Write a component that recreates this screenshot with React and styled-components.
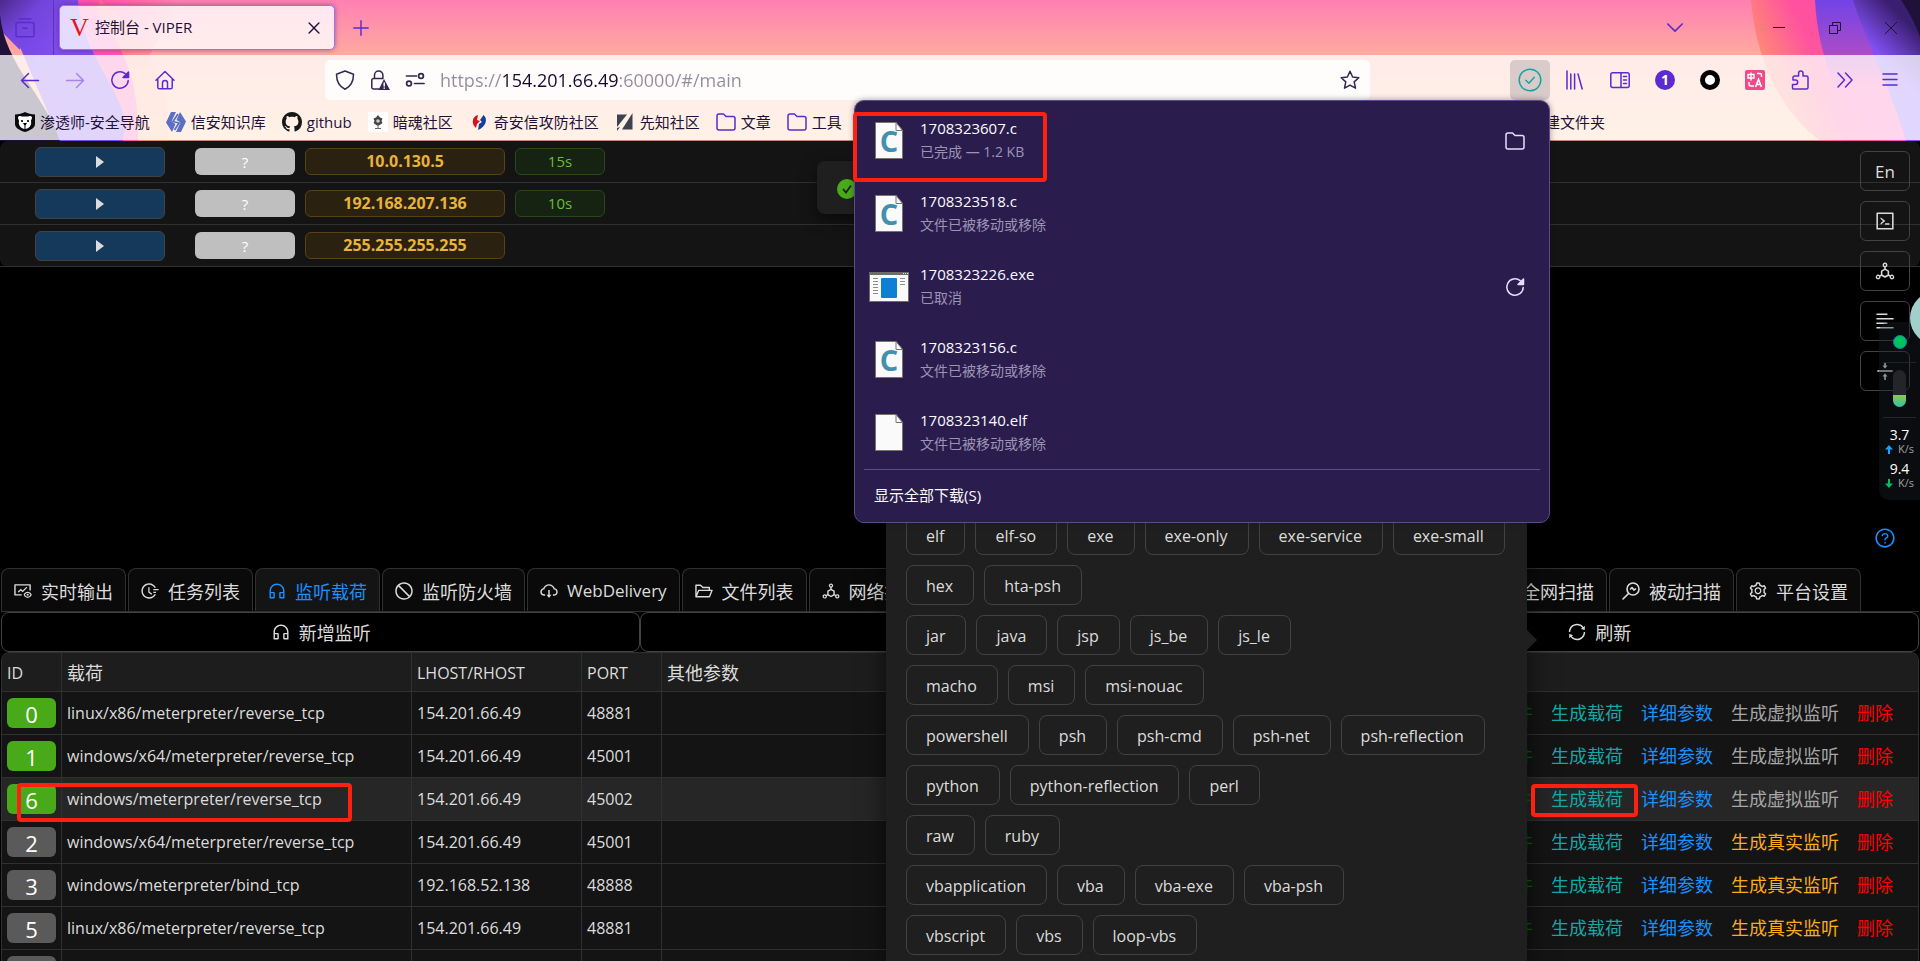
import React, { useState } from 'react'
import styled, { createGlobalStyle } from 'styled-components'
import {
  AiOutlineFundView,
  AiOutlineFieldTime,
  AiOutlineCustomerService,
  AiOutlineStop,
  AiOutlineCloudDownload,
  AiOutlineFolderOpen,
  AiOutlineDeploymentUnit,
  AiOutlineSetting,
  AiOutlineSync,
  AiOutlineCode,
  AiOutlineAlignLeft,
  AiOutlineVerticalAlignMiddle,
  AiOutlineQuestionCircle,
  AiOutlineRadarChart,
} from 'react-icons/ai'

const sessions = [
  { ip: '10.0.130.5', delay: '15s' },
  { ip: '192.168.207.136', delay: '10s' },
  { ip: '255.255.255.255' },
]

const downloads = [
  { name: '1708323607.c', state: '已完成 — 1.2 KB', type: 'c', action: 'folder' },
  { name: '1708323518.c', state: '文件已被移动或移除', type: 'c' },
  { name: '1708323226.exe', state: '已取消', type: 'exe', action: 'retry' },
  { name: '1708323156.c', state: '文件已被移动或移除', type: 'c' },
  { name: '1708323140.elf', state: '文件已被移动或移除', type: 'elf' },
]

const formats = [
  ['elf', 'elf-so', 'exe', 'exe-only', 'exe-service', 'exe-small'],
  ['hex', 'hta-psh'],
  ['jar', 'java', 'jsp', 'js_be', 'js_le'],
  ['macho', 'msi', 'msi-nouac'],
  ['powershell', 'psh', 'psh-cmd', 'psh-net', 'psh-reflection'],
  ['python', 'python-reflection', 'perl'],
  ['raw', 'ruby'],
  ['vbapplication', 'vba', 'vba-exe', 'vba-psh'],
  ['vbscript', 'vbs', 'loop-vbs'],
]

const handlers = [
  { id: 0, payload: 'linux/x86/meterpreter/reverse_tcp', host: '154.201.66.49', port: 48881, live: true },
  { id: 1, payload: 'windows/x64/meterpreter/reverse_tcp', host: '154.201.66.49', port: 45001, live: true },
  { id: 6, payload: 'windows/meterpreter/reverse_tcp', host: '154.201.66.49', port: 45002, live: true, hover: true },
  { id: 2, payload: 'windows/x64/meterpreter/reverse_tcp', host: '154.201.66.49', port: 45001 },
  { id: 3, payload: 'windows/meterpreter/bind_tcp', host: '192.168.52.138', port: 48888 },
  { id: 5, payload: 'linux/x86/meterpreter/reverse_tcp', host: '154.201.66.49', port: 48881 },
  { id: 4, payload: 'windows/x64/meterpreter/bind_tcp', host: '192.168.52.138', port: 48888 },
]

const leftTabs = [
  { label: '实时输出', icon: AiOutlineFundView },
  { label: '任务列表', icon: AiOutlineFieldTime },
  { label: '监听载荷', icon: AiOutlineCustomerService },
  { label: '监听防火墙', icon: AiOutlineStop },
  { label: 'WebDelivery', icon: AiOutlineCloudDownload, latin: true },
  { label: '文件列表', icon: AiOutlineFolderOpen },
  { label: '网络拓扑', icon: AiOutlineDeploymentUnit },
]

const rightTabs = [
  { label: '全网扫描', icon: AiOutlineRadarChart },
  { label: '被动扫描', icon: PassiveScanIcon },
  { label: '平台设置', icon: AiOutlineSetting },
]

/* ---------- icons ---------- */

function Line({ size = 20, width = 1.5, children, ...rest }) {
  return (
    <svg width={size} height={size} viewBox="0 0 20 20" fill="none" stroke="currentColor"
      strokeWidth={width} strokeLinecap="round" strokeLinejoin="round" {...rest}>
      {children}
    </svg>
  )
}

function PassiveScanIcon() {
  return (
    <Line size={18} width={1.6}>
      <circle cx="12" cy="8" r="6" />
      <path d="M7.500 12.500L2 18M9.500 8l1.500-1.500 1.800 2.500L14.500 8" />
    </Line>
  )
}

const ArchiveIcon = () => (
  <Line><path d="M4 1h12M2.6 4.6h14.8a1.6 1.6 0 0 1 1.6 1.6v11a1.6 1.6 0 0 1-1.6 1.6H2.6A1.6 1.6 0 0 1 1 17.200V6.200a1.6 1.6 0 0 1 1.600-1.600zM8 10.200h4" /></Line>
)
const CloseIcon = () => <Line size={14}><path d="M3 3l14 14M17 3L3 17" strokeWidth="2" /></Line>
const PlusIcon = () => <Line size={16}><path d="M10 1v18M1 10h18" strokeWidth="1.800" /></Line>
const BackIcon = () => <Line><path d="M18.500 10.500H1.500M8.500 3.500l-7 7 7 7" /></Line>
const ForwardIcon = () => <Line><path d="M1.500 10.500h17M11.500 3.500l7 7-7 7" /></Line>
const ReloadIcon = () => (
  <Line><path d="M18.200 10.500a8.200 8.200 0 1 1-3-6.800" /><path d="M18.500 2v5.500H13z" fill="currentColor" /></Line>
)
const HomeIcon = () => (
  <Line><path d="M1 10.200L10 1.500l9 8.700M2.800 9v8.200c0 1 .7 1.600 1.600 1.600h11.200c.9 0 1.600-.6 1.600-1.600V9M7.500 18.500V13a2.500 2.500 0 0 1 5 0v5.500" /></Line>
)
const ShieldIcon = () => (
  <Line><path d="M10 1l8.500 3.200c0 6.800-1.800 11.800-8.500 15C3.300 16 1.500 11 1.500 4.200z" /></Line>
)
const LockIcon = () => (
  <Line>
    <path d="M4.500 8.500V5.200a4.200 4.200 0 0 1 8.400 0v3.300M9 19H3.500A1.700 1.700 0 0 1 1.800 17.300V10.200a1.700 1.700 0 0 1 1.700-1.700H13" />
    <path d="M14 9l6 11H8.500z" fill="currentColor" stroke="none" />
    <path d="M14.200 13v3M14.200 18v.2" stroke="#fff" />
  </Line>
)
const PermissionIcon = () => (
  <Line width={1.700}><path d="M1.500 6h10M9.500 13.500H19" /><circle cx="16" cy="6" r="2.400" /><circle cx="4" cy="13.500" r="2.400" /></Line>
)
const StarIcon = () => (
  <Line><path d="M10 1.300l2.600 5.700 6.200.7-4.600 4.200 1.300 6.300L10 15.100l-5.500 3.100 1.300-6.300L1.200 7.700l6.200-.7z" /></Line>
)
const DoneIcon = () => <Line size={24} width={1.200}><circle cx="10" cy="10" r="9" /><path d="M6.500 10.200l2.600 2.500 4.500-5" /></Line>
const LibraryIcon = () => <Line><path d="M2 1v18M5.800 4v15M9.600 4v15M13 4l4.200 15" /></Line>
const SidebarIcon = () => (
  <Line><rect x=".8" y="2.800" width="18.400" height="14.600" rx="2" /><path d="M11 3v14M13.500 6.500h3M13.500 10h3M13.500 13.500h3" /></Line>
)
const PuzzleIcon = () => (
  <Line><path d="M3 19h13.500c.8 0 1.500-.7 1.500-1.500V7.500c0-.8-.7-1.500-1.500-1.500H13V3.200a2.200 2.200 0 0 0-4.400 0V6H4.500C3.700 6 3 6.700 3 7.500V10h2.500a2.200 2.200 0 0 1 0 4.400H2.500V18c0 .6.200 1 .5 1z" /></Line>
)
const MoreIcon = () => <Line><path d="M3 3l6.500 7L3 17M10.500 3l6.500 7-6.500 7" /></Line>
const MenuIcon = () => <Line><path d="M3 4h14M3 9.500h14M3 15h14" /></Line>
const ChevronIcon = () => <Line size={18}><path d="M2 5.500l8 8 8-8" strokeWidth="1.800" /></Line>
const FolderIcon = ({ size = 20 }) => (
  <Line size={size}><path d="M1 4a2 2 0 0 1 2-2h4.500l2.500 2.500h7a2 2 0 0 1 2 2V16a2 2 0 0 1-2 2H3a2 2 0 0 1-2-2z" /></Line>
)

const BearIcon = () => (
  <svg width="20" height="20" viewBox="0 0 20 20">
    <path d="M0 2.500C4 2.500 7 1.500 10 0c3 1.500 6 2.500 10 2.500V12c0 4-5 6.500-10 8-5-1.500-10-4-10-8z" fill="#0b0b0b" />
    <path d="M3 5.500C4 3 6 4 7 4.500h6c1-.5 3-1.500 4 1 0 2-1 2-1 3.500 1 4-2 8-6 8s-7-4-6-8c0-1.500-1-1.500-1-3.500z" fill="#fff" />
    <circle cx="7" cy="9" r="1.100" /><circle cx="13" cy="9" r="1.100" /><path d="M8 11h4l-1.500 2.500V17h-1v-3.500z" />
  </svg>
)
const KnowledgeIcon = () => (
  <svg width="20" height="20" viewBox="0 0 20 20">
    <path d="M5 0h5L5.500 9.500l4 2.500L6 20 0 10.500z" fill="#5b6fc4" />
    <path d="M15 20h-5l4.500-9.500-4-2.500L14 0l6 9.500z" fill="#5b6fc4" />
    <path d="M12 2L7 9.500l6 1.500-4.500 7" fill="none" stroke="#5b6fc4" strokeWidth="1.800" />
  </svg>
)
const GithubIcon = () => (
  <svg width="20" height="20" viewBox="0 0 16 16" fill="#181717">
    <path d="M8 0C3.580 0 0 3.580 0 8c0 3.540 2.290 6.530 5.470 7.590.4.070.55-.17.55-.38 0-.19-.01-.82-.01-1.490-2.010.37-2.530-.49-2.690-.94-.09-.23-.48-.94-.82-1.130-.28-.15-.68-.52-.01-.53.63-.01 1.080.58 1.230.82.72 1.210 1.870.87 2.330.66.07-.52.28-.87.51-1.070-1.780-.2-3.640-.89-3.640-3.950 0-.87.31-1.590.82-2.150-.08-.2-.36-1.020.08-2.120 0 0 .67-.21 2.200.82.64-.18 1.320-.27 2-.27s1.360.09 2 .27c1.530-1.040 2.200-.82 2.200-.82.44 1.100.16 1.920.08 2.120.51.56.82 1.270.82 2.150 0 3.070-1.870 3.750-3.650 3.950.29.25.54.73.54 1.480 0 1.070-.01 1.930-.01 2.200 0 .21.15.46.55.38A8.010 8.010 0 0 0 16 8c0-4.420-3.580-8-8-8z" />
  </svg>
)
const SoulIcon = () => (
  <svg width="20" height="20" viewBox="0 0 20 20">
    <rect width="20" height="20" fill="#fff" />
    <path d="M10 3l2 2.500 2.500 1-1 2.500 1 2-3.500 2.500h-2L5.500 11l1-2-1-2.500 2.500-1z" fill="#444" />
    <circle cx="10" cy="9" r="1.800" fill="#c9d6c4" />
    <path d="M10 12.500v4M7 16.500h6" stroke="#666" />
  </svg>
)
const BoltIcon = () => (
  <svg width="20" height="20" viewBox="0 0 20 20">
    <path d="M9 3C3 4 2 12 7 16l1-4 3-3-3-1z" fill="#d0161d" />
    <path d="M14.500 3c5 4 2 12-5.500 15l1-6 3-2-2-2z" fill="#123f9c" />
  </svg>
)
const XianzhiIcon = () => (
  <svg width="20" height="20" viewBox="0 0 20 20" fill="#3c424e">
    <path d="M2 2.500h10L2 15z" /><path d="M17.500 1v16.500H7z" /><path d="M2 16l3-1-3 4z" />
  </svg>
)
const TranslateIcon = () => (
  <svg width="20" height="20" viewBox="0 0 20 20">
    <rect width="20" height="20" rx="2" fill="#ec4b87" />
    <path d="M3 4.500h6v3.500H3zM6 2.500v8M12 3.500h3a1.500 1.500 0 0 1 1.500 1.500v2M4 12v2a2 2 0 0 0 2 2h3" fill="none" stroke="#fff" strokeWidth="1.400" />
    <path d="M10.500 17l3-7.500 3 7.500M11.500 14.500h4" fill="none" stroke="#fff" strokeWidth="1.600" />
  </svg>
)

function FileIcon({ type }) {
  if (type === 'exe') {
    return (
      <svg width="40" height="40" viewBox="0 0 40 40">
        <rect x=".5" y="5.500" width="39" height="29" fill="#fafafa" stroke="#6d6d68" />
        <path d="M0 5h40v3H0z" fill="#6d6d68" />
        <path d="M34 6.500h1M36 6.500h1M38 6.500h1" stroke="#ddd" />
        <path d="M4 11.500h5M4 14.500h5M4 17.500h5M4 20.500h5M4 23.500h5M4 26.500h5M31 11.500h5M31 14.500h5M31 17.500h5" stroke="#8c8c8c" />
        <rect x="12" y="11" width="16" height="20" rx="1" fill="#0f7fd4" />
      </svg>
    )
  }
  return (
    <svg width="40" height="40" viewBox="0 0 40 40">
      <path d="M6.500 1.500H27l6.500 8v28H6.500z" fill="#fafafa" stroke="#77756f" />
      <path d="M27 1.500v8h6.500z" fill="#fafafa" stroke="#77756f" />
      {type === 'c' && (
        <text x="20" y="31" textAnchor="middle" fontFamily="Open Sans, sans-serif" fontWeight="700" fontSize="29" fill="#438fae">C</text>
      )}
    </svg>
  )
}

// coloured ribbons behind the tab strip, one set per window corner
function Ribbons() {
  return (
    <>
      <RibbonSvg $side="left" width="240" height="141" viewBox="0 0 240 141">
        <defs>
          <linearGradient id="lp" x1="0" y1="0" x2="1" y2="0"><stop offset="0" stopColor="#ff4b9d" /><stop offset="1" stopColor="#ff4b9d" stopOpacity="0" /></linearGradient>
          <linearGradient id="lv" gradientUnits="userSpaceOnUse" x1="0" y1="0" x2="50" y2="50"><stop offset="0" stopColor="#4a2a8c" /><stop offset=".45" stopColor="#7445dc" /><stop offset="1" stopColor="#7f4ced" /></linearGradient>
        </defs>
        <path d="M70 0h110L150 55H95z" fill="url(#lp)" />
        <path d="M100 0C150 40 168 80 168 141H60z" fill="#ff9472" fillOpacity=".4" />
        <path d="M86 0C125 45 139 80 138 141H60L40 0z" fill="#ff50b0" fillOpacity=".9" />
        <path d="M78 0C80 40 105 70 118 100S123 130 123 141H60L0 0z" fill="url(#lv)" />
        <path d="M0 0v30l20 20L30 0z" fill="url(#lv)" />
        <path d="M0 15C5 65 45 95 60 141H0z" fill="#1f1139" />
      </RibbonSvg>
      <RibbonSvg $side="right" width="240" height="141" viewBox="0 0 240 141">
        <defs>
          <linearGradient id="rp" gradientUnits="userSpaceOnUse" x1="70" y1="40" x2="120" y2="20"><stop offset="0" stopColor="#ff8a6e" /><stop offset="1" stopColor="#ff4b9d" /></linearGradient>
          <linearGradient id="rv" x1="0" y1="0" x2="0" y2="1"><stop offset="0" stopColor="#7243e6" /><stop offset=".38" stopColor="#ab4cc8" /><stop offset=".6" stopColor="#ff50b0" /></linearGradient>
          <linearGradient id="rd" gradientUnits="userSpaceOnUse" x1="195" y1="50" x2="225" y2="20"><stop offset="0" stopColor="#8250f4" /><stop offset="1" stopColor="#3a1f70" /></linearGradient>
        </defs>
        <path d="M71 0C76 60 100 110 140 141h100V0z" fill="url(#rp)" fillOpacity=".9" />
        <path d="M135 0C138 60 160 110 200 141h40V0z" fill="url(#rv)" />
        <path d="M173 0C185 40 212 90 226 141h14V0z" fill="url(#rd)" />
        <path d="M221 0c9 14 15 25 19 37V0z" fill="#1f1139" />
      </RibbonSvg>
    </>
  )
}

/* ---------- sections ---------- */

function BrowserChrome() {
  const [url, setUrl] = useState('https://154.201.66.49:60000/#/main')

  return (
    <Chrome>
      <Ribbons />
      <TabStrip>
        <ArchiveBox><IconButton aria-label="最近浏览"><ArchiveIcon /></IconButton></ArchiveBox>
        <BrowserTab>
          <Favicon>V</Favicon>
          <span>控制台 - VIPER</span>
          <IconButton $dark aria-label="关闭标签页"><CloseIcon /></IconButton>
        </BrowserTab>
        <IconButton aria-label="打开新标签页"><PlusIcon /></IconButton>
        <WindowButtons>
          <IconButton aria-label="列出所有标签页"><ChevronIcon /></IconButton>
          <IconButton $dark aria-label="最小化"><svg width="12" height="12"><path d="M0 5.500h12" stroke="currentColor" /></svg></IconButton>
          <IconButton $dark aria-label="还原"><svg width="12" height="12" fill="none" stroke="currentColor"><path d="M.5 3.500h8v8h-8zM3.500 3.500v-3h8v8h-3" /></svg></IconButton>
          <IconButton $dark aria-label="关闭"><svg width="14" height="14" stroke="currentColor"><path d="M1 1l12 12M13 1L1 13" /></svg></IconButton>
        </WindowButtons>
      </TabStrip>
      <Toolbar>
        <NavRow>
          <NavButtons>
            <IconButton aria-label="后退"><BackIcon /></IconButton>
            <IconButton aria-label="前进" $faded><ForwardIcon /></IconButton>
            <IconButton aria-label="刷新"><ReloadIcon /></IconButton>
            <IconButton aria-label="主页"><HomeIcon /></IconButton>
          </NavButtons>
          <UrlBar>
            <ShieldIcon />
            <LockIcon />
            <PermissionIcon />
            <UrlInput aria-label="地址栏" value={url} onChange={(e) => setUrl(e.target.value)} />
            <StarIcon />
          </UrlBar>
          <ToolButtons>
            <IconButton aria-label="下载" $active><DoneIcon /></IconButton>
            <IconButton aria-label="我的足迹"><LibraryIcon /></IconButton>
            <IconButton aria-label="侧栏"><SidebarIcon /></IconButton>
            <IconButton aria-label="容器"><CountDot>1</CountDot></IconButton>
            <IconButton aria-label="代理"><Ring /></IconButton>
            <IconButton aria-label="翻译"><TranslateIcon /></IconButton>
            <IconButton aria-label="扩展"><PuzzleIcon /></IconButton>
            <IconButton aria-label="更多工具"><MoreIcon /></IconButton>
            <IconButton aria-label="应用程序菜单"><MenuIcon /></IconButton>
          </ToolButtons>
        </NavRow>
        <Bookmarks>
          <Bookmark href="#nav"><BearIcon />渗透师-安全导航</Bookmark>
          <Bookmark href="#kb"><KnowledgeIcon />信安知识库</Bookmark>
          <Bookmark href="#github"><GithubIcon />github</Bookmark>
          <Bookmark href="#anhun"><SoulIcon />暗魂社区</Bookmark>
          <Bookmark href="#butian"><BoltIcon />奇安信攻防社区</Bookmark>
          <Bookmark href="#xz"><XianzhiIcon />先知社区</Bookmark>
          <Bookmark href="#articles"><FolderIcon />文章</Bookmark>
          <Bookmark href="#tools"><FolderIcon />工具</Bookmark>
          <LastBookmark href="#new"><FolderIcon />新建文件夹</LastBookmark>
        </Bookmarks>
      </Toolbar>
    </Chrome>
  )
}

function DownloadsPanel() {
  return (
    <Downloads>
      <DownloadList>
        {downloads.map((item) => (
          <DownloadItem key={item.name}>
            <FileIcon type={item.type} />
            <div>
              <FileName>{item.name}</FileName>
              <FileState>{item.state}</FileState>
            </div>
            {item.action === 'folder' && <IconButton $light aria-label="打开文件夹"><FolderIcon /></IconButton>}
            {item.action === 'retry' && <IconButton $light aria-label="重试"><ReloadIcon /></IconButton>}
          </DownloadItem>
        ))}
      </DownloadList>
      <ShowAll>显示全部下载(S)</ShowAll>
      <RedFrame $left={-2} $top={11} $width={194} $height={70} />
    </Downloads>
  )
}

function SessionList() {
  return (
    <SessionRows>
      {sessions.map((s) => (
        <SessionRow key={s.ip}>
          <PlayButton aria-label="操作">
            <svg width="8" height="12" viewBox="0 0 8 12" fill="#dcdcdc"><path d="M0 0l8 6-8 6z" /></svg>
          </PlayButton>
          <UnknownTag>?</UnknownTag>
          <IpTag>{s.ip}</IpTag>
          {s.delay && <DelayTag>{s.delay}</DelayTag>}
        </SessionRow>
      ))}
    </SessionRows>
  )
}

function ConsoleTabs({ tabs, current, onSelect }) {
  return (
    <TabGroup>
      {tabs.map(({ label, icon: Icon, latin }) => (
        <ConsoleTab key={label} role="tab" $active={label === current} $latin={latin} onClick={() => onSelect(label)}>
          <Icon />{label}
        </ConsoleTab>
      ))}
    </TabGroup>
  )
}

function HandlerTable() {
  return (
    <Table>
      <colgroup>
        <col width="60" /><col width="350" /><col width="170" /><col width="80" /><col />
      </colgroup>
      <thead>
        <tr><th>ID</th><th>载荷</th><th>LHOST/RHOST</th><th>PORT</th><th>其他参数</th></tr>
      </thead>
      <tbody>
        {handlers.map((h) => (
          <Row key={h.id} $hover={h.hover}>
            <td><IdBadge $live={h.live}>{h.id}</IdBadge></td>
            <td>{h.payload}</td>
            <td>{h.host}</td>
            <td>{h.port}</td>
            <td>
              <Actions>
                <Action href="#file" $color="#006400">文件</Action>
                <Action href="#generate" $color="#13a8a8">生成载荷</Action>
                <Action href="#detail" $color="#1890ff">详细参数</Action>
                {h.live
                  ? <Action href="#virtual" $color="#a6a6a6">生成虚拟监听</Action>
                  : <Action href="#real" $color="#faad14">生成真实监听</Action>}
                <Action href="#delete" $color="#ff0000">删除</Action>
              </Actions>
            </td>
          </Row>
        ))}
      </tbody>
    </Table>
  )
}

function TrafficWidget() {
  return (
    <Widget>
      <StatusDot />
      <Gauge><i /></Gauge>
      <Speed $up><b>3.7</b><span><svg width="8" height="9" viewBox="0 0 8 9"><path d="M4 0l4 4.500H5V9H3V4.500H0z" /></svg>K/s</span></Speed>
      <Speed><b>9.4</b><span><svg width="8" height="9" viewBox="0 0 8 9"><path d="M4 9L0 4.500h3V0h2v4.500h3z" /></svg>K/s</span></Speed>
    </Widget>
  )
}

function App() {
  const [tab, setTab] = useState('监听载荷')

  return (
    <Page>
      <GlobalStyle />
      <BrowserChrome />
      <Main>
        <SessionArea>
          <SessionList />
        </SessionArea>
        <ConsoleArea>
          <TabBar role="tablist">
            <ConsoleTabs tabs={leftTabs} current={tab} onSelect={setTab} />
            <ConsoleTabs tabs={rightTabs} current={tab} onSelect={setTab} />
          </TabBar>
          <ButtonRow>
            <WideButton><AiOutlineCustomerService />新增监听</WideButton>
            <WideButton aria-label="生成载荷" />
            <WideButton><AiOutlineSync />刷新</WideButton>
          </ButtonRow>
          <HandlerTable />
          <RedFrame $left={17} $top={215} $width={335} $height={39} />
        </ConsoleArea>
        <SideTools>
          <SideButton>En</SideButton>
          <SideButton aria-label="终端"><AiOutlineCode /></SideButton>
          <SideButton aria-label="拓扑"><AiOutlineDeploymentUnit /></SideButton>
          <SideButton aria-label="列表"><AiOutlineAlignLeft /></SideButton>
          <SideButton aria-label="收起"><AiOutlineVerticalAlignMiddle /></SideButton>
        </SideTools>
        <HelpButton aria-label="帮助"><AiOutlineQuestionCircle /></HelpButton>
        <TrafficWidget />
        <FloatBall />
        <Toast>
          <svg width="20" height="20" viewBox="0 0 20 20"><circle cx="10" cy="10" r="10" fill="#49aa19" /><path d="M6 10l3 3.500L14 6.500" fill="none" stroke="#1f1f1f" strokeWidth="1.800" /></svg>
        </Toast>
        <FormatPopover>
          {formats.map((row) => (
            <FormatRow key={row[0]}>
              {row.map((f) => <FormatButton key={f}>{f}</FormatButton>)}
            </FormatRow>
          ))}
        </FormatPopover>
        <RedFrame $left={1531} $top={643} $width={107} $height={33} />
      </Main>
      <DownloadsPanel />
    </Page>
  )
}

/* ---------- styles ---------- */

const GlobalStyle = createGlobalStyle`
  * {
    box-sizing: border-box;
  }
  body {
    margin: 0;
    background: #000;
    font-family: "Open Sans", "Noto Sans CJK SC", sans-serif;
    overflow: hidden;
  }
  button, input {
    font-family: inherit;
    margin: 0;
  }
  svg {
    flex: none;
    display: block;
  }
  a {
    text-decoration: none;
  }
`;

const Page = styled.div`
  position: relative;
  height: 100vh;
  display: flex;
  flex-direction: column;
  overflow: hidden;
`;

const Chrome = styled.header`
  position: relative;
  isolation: isolate;
  flex: none;
  background: linear-gradient(#ff80b3, #ffaa9f 55px, #ffc596);
  border-bottom: 1px solid #be8c78;
  color: #1f1139;
`;

const RibbonSvg = styled.svg`
  position: absolute;
  z-index: -1;
  top: 0;
  ${({ $side }) => $side}: 0;
`;

const TabStrip = styled.div`
  display: flex;
  align-items: center;
  height: 55px;
`;

const IconButton = styled.button`
  display: flex;
  align-items: center;
  justify-content: center;
  width: 40px;
  height: 40px;
  padding: 0;
  border: none;
  border-radius: 5px;
  background: ${({ $active }) => ($active ? '#d9cbca' : 'transparent')};
  color: ${({ $dark, $light, $active }) => ($dark ? '#1f1139' : $light ? '#e6defb' : $active ? '#12a5a0' : '#5b2bcf')};
  opacity: ${({ $faded }) => ($faded ? 0.45 : 1)};
`;

const ArchiveBox = styled.div`
  display: flex;
  align-items: center;
  height: 100%;
  width: 54px;
  padding-left: 5px;
  border-right: 1px solid #5a35b8;
`;

const BrowserTab = styled.div`
  display: flex;
  align-items: center;
  width: 276px;
  height: 45px;
  margin: 0 6px 0 5px;
  padding-left: 10px;
  border: 1px solid #a46cf5;
  border-radius: 5px;
  background: rgba(255, 255, 255, 0.8);
  box-shadow: 0 0 5px rgba(70, 30, 110, 0.5);
  font-size: 15px;
  line-height: 20px;
  span {
    flex: 1;
    padding-bottom: 2px;
  }
`;

const Favicon = styled.i`
  width: 25px;
  font-family: "Liberation Serif", serif;
  font-style: normal;
  font-size: 26px;
  line-height: 26px;
  color: #ee1111;
`;

const WindowButtons = styled.div`
  display: flex;
  margin-left: auto;
  padding-right: 9px;
  gap: 16px;
  button:first-child {
    margin-right: 48px;
  }
`;

const Toolbar = styled.div`
  background: rgba(255, 255, 255, 0.765);
  height: 85px;
`;

const NavRow = styled.div`
  display: flex;
  align-items: center;
  padding: 5px 10px 0;
`;

const NavButtons = styled.div`
  display: flex;
  gap: 5px;
  flex: 0 0 315px;
`;

const UrlBar = styled.div`
  display: flex;
  align-items: center;
  flex: 1;
  height: 40px;
  gap: 15px;
  padding: 0 10px;
  border-radius: 5px;
  background: rgba(255, 255, 255, 0.85);
  color: #35264f;
`;

// scheme and path are dimmed, the host keeps the full colour
const UrlInput = styled.input`
  flex: 1;
  min-width: 0;
  padding: 0;
  border: none;
  outline: none;
  font-size: 18px;
  line-height: 28px;
  color: transparent;
  background: linear-gradient(90deg, #938b9f 62px, #15092b 62px, #15092b 179px, #938b9f 179px);
  background-clip: text;
  -webkit-background-clip: text;
`;

const ToolButtons = styled.div`
  display: flex;
  gap: 5px;
  margin-left: 140px;
`;

const CountDot = styled.span`
  width: 20px;
  height: 20px;
  border-radius: 50%;
  background: #5b2bcf;
  color: #fff;
  font-size: 14px;
  font-weight: 700;
  line-height: 20px;
  text-align: center;
`;

const Ring = styled.span`
  width: 20px;
  height: 20px;
  border-radius: 50%;
  border: 5px solid #000;
  background: #fff;
`;

const Bookmarks = styled.nav`
  display: flex;
  align-items: center;
  gap: 16px;
  height: 40px;
  padding: 4px 15px 0;
`;

const Bookmark = styled.a`
  display: flex;
  align-items: center;
  gap: 5px;
  color: #1f1139;
  font-size: 15px;
  line-height: 24px;
  white-space: nowrap;
  svg[stroke] {
    color: #5b2bcf;
  }
`;

const LastBookmark = styled(Bookmark)`
  margin-left: auto;
  margin-right: 300px;
`;

const Downloads = styled.section`
  position: absolute;
  z-index: 10;
  top: 100px;
  right: 370px;
  width: 696px;
  padding: 3px 9px;
  border: 1px solid #5c4e84;
  border-radius: 10px;
  background: #2a1d4e;
  box-shadow: 0 0 6px rgba(20, 10, 40, 0.4);
  color: #fbfbfe;
`;

const DownloadList = styled.ul`
  list-style: none;
  margin: 0;
  padding: 0;
  border-bottom: 1px solid #5c4e84;
`;

const DownloadItem = styled.li`
  display: flex;
  align-items: center;
  gap: 11px;
  height: 73px;
  padding: 0 5px;
  > div {
    flex: 1;
    padding-bottom: 2px;
  }
`;

const FileName = styled.div`
  font-size: 15px;
  line-height: 24px;
`;

const FileState = styled.div`
  font-size: 14px;
  line-height: 24px;
  color: #9d94b4;
`;

const ShowAll = styled.button`
  display: block;
  width: 100%;
  height: 49px;
  padding: 0 10px;
  border: none;
  background: none;
  color: #fbfbfe;
  font-size: 15px;
  text-align: left;
`;

const RedFrame = styled.div`
  position: absolute;
  z-index: 12;
  left: ${({ $left }) => $left}px;
  top: ${({ $top }) => $top}px;
  width: ${({ $width }) => $width}px;
  height: ${({ $height }) => $height}px;
  border: 4px solid #ff2010;
  border-radius: 4px;
  pointer-events: none;
`;

const Main = styled.main`
  position: relative;
  flex: 1;
  min-height: 0;
  display: flex;
  flex-direction: column;
  color: #dcdcdc;
`;

const SessionArea = styled.section`
  flex: 1;
`;

const SessionRows = styled.div`
  background: #141414;
  border-radius: 8px;
`;

const SessionRow = styled.div`
  display: flex;
  align-items: center;
  gap: 10px;
  height: 42px;
  padding-left: 35px;
  border-bottom: 1px solid #303030;
`;

const PlayButton = styled.button`
  display: flex;
  align-items: center;
  justify-content: center;
  width: 130px;
  height: 30px;
  margin-right: 20px;
  border: 1px solid #424242;
  border-radius: 6px;
  background: #15395b;
`;

const Tag = styled.span`
  height: 27px;
  border-radius: 6px;
  font-size: 15px;
  line-height: 25px;
  text-align: center;
`;

const UnknownTag = styled(Tag)`
  width: 100px;
  background: #bfbfbf;
  color: #fff;
  line-height: 29px;
`;

const IpTag = styled(Tag)`
  width: 200px;
  border: 1px solid #594214;
  background: #2b2111;
  color: #e8b339;
  font-size: 16px;
  font-weight: 700;
`;

const DelayTag = styled(Tag)`
  width: 90px;
  border: 1px solid #274916;
  background: #162312;
  color: #6abe39;
`;

const ConsoleArea = styled.section`
  position: relative;
  flex: 0 0 393px;
  overflow: hidden;
  padding: 0 1px;
`;

const TabBar = styled.div`
  display: flex;
  justify-content: space-between;
  height: 44px;
  padding-right: 58px;
  border-bottom: 1px solid #303030;
`;

const TabGroup = styled.div`
  display: flex;
  gap: 2px;
`;

const ConsoleTab = styled.button`
  display: flex;
  align-items: center;
  gap: 8px;
  padding: 1px 12px 0 11px;
  border: 1px solid #303030;
  border-bottom: none;
  border-radius: 8px 8px 0 0;
  background: ${({ $active }) => ($active ? '#141414' : '#0a0a0a')};
  color: ${({ $active }) => ($active ? '#1890ff' : '#dcdcdc')};
  font-size: ${({ $latin }) => ($latin ? 17 : 18)}px;
  white-space: nowrap;
  svg {
    width: 20px;
    height: 20px;
  }
`;

const ButtonRow = styled.div`
  display: grid;
  grid-template-columns: repeat(3, 1fr);
`;

const WideButton = styled.button`
  display: flex;
  align-items: center;
  justify-content: center;
  gap: 8px;
  height: 40px;
  border: 1px solid #424242;
  border-radius: 8px;
  background: #000;
  color: #dcdcdc;
  font-size: 18px;
  svg {
    width: 20px;
    height: 20px;
  }
`;

const Table = styled.table`
  width: 100%;
  table-layout: fixed;
  border-collapse: separate;
  border-spacing: 0;
  border: 1px solid #303030;
  border-radius: 8px 8px 0 0;
  background: #141414;
  font-size: 16px;
  overflow: hidden;
  th, td {
    height: 43px;
    padding: 0 5px;
    border-right: 1px solid #303030;
    border-bottom: 1px solid #303030;
    text-align: left;
    font-weight: 400;
    white-space: nowrap;
  }
  th {
    height: 39px;
    padding-top: 2px;
    background: #1d1d1d;
  }
  th:nth-child(2), th:last-child {
    font-size: 18px;
    line-height: 24px;
  }
  th:last-child, td:last-child {
    border-right: none;
  }
`;

const Row = styled.tr`
  background: ${({ $hover }) => ($hover ? '#262626' : '#141414')};
`;

const IdBadge = styled.span`
  display: block;
  width: 49px;
  height: 30px;
  border-radius: 6px;
  background: ${({ $live }) => ($live ? '#49aa19' : '#5a5a5a')};
  color: #fff;
  font-size: 22px;
  line-height: 32px;
  text-align: center;
`;

const Actions = styled.div`
  display: flex;
  justify-content: flex-end;
  gap: 18px;
  padding-right: 20px;
`;

const Action = styled.a`
  color: ${({ $color }) => $color};
  font-size: 18px;
  line-height: 24px;
`;

const SideTools = styled.div`
  position: absolute;
  top: 10px;
  right: 10px;
  display: grid;
  gap: 10px;
`;

const SideButton = styled.button`
  display: flex;
  align-items: center;
  justify-content: center;
  width: 50px;
  height: 40px;
  padding: 0;
  border: 1px solid #424242;
  border-radius: 6px;
  background: transparent;
  color: #dcdcdc;
  font-size: 17px;
  svg {
    width: 22px;
    height: 22px;
  }
`;

const HelpButton = styled.button`
  position: absolute;
  right: 24px;
  top: 386px;
  padding: 0;
  border: none;
  background: none;
  color: #1890ff;
  svg {
    width: 22px;
    height: 22px;
  }
`;

const Widget = styled.aside`
  position: absolute;
  top: 181px;
  right: 0;
  display: flex;
  flex-direction: column;
  align-items: center;
  width: 41px;
  height: 178px;
  padding-top: 13px;
  border-radius: 10px 0 0 10px;
  background: rgba(28, 32, 42, 0.38);
`;

const StatusDot = styled.span`
  width: 14px;
  height: 14px;
  border: 1px solid #0d7fa0;
  border-radius: 50%;
  background: #00c261;
`;

const Gauge = styled.div`
  display: flex;
  justify-content: center;
  width: 33px;
  margin: 13px 0 9px;
  padding: 7px 0 10px;
  border-top: 1px solid #1c2426;
  border-bottom: 1px solid #24262a;
  i {
    width: 13px;
    height: 37px;
    border-radius: 7px;
    background: linear-gradient(#242528 25px, #8bc84a 25px, #34bfa8);
  }
`;

const Speed = styled.div`
  display: flex;
  flex-direction: column;
  align-items: center;
  height: 34px;
  b {
    color: #fff;
    font-size: 14px;
    font-weight: 400;
    line-height: 16px;
  }
  span {
    display: flex;
    align-items: center;
    gap: 5px;
    color: #a0a0a0;
    font-size: 11px;
    line-height: 12px;
  }
  svg {
    fill: ${({ $up }) => ($up ? '#12a5ff' : '#00c261')};
  }
`;

const FloatBall = styled.div`
  position: absolute;
  top: 150px;
  right: -44px;
  width: 54px;
  height: 54px;
  border-radius: 50%;
  background: #a3cfca;
`;

const Toast = styled.div`
  position: absolute;
  top: 20px;
  left: 817px;
  width: 286px;
  padding: 18px 20px 15px;
  border-radius: 8px;
  background: #1f1f1f;
  box-shadow: 0 6px 16px rgba(0, 0, 0, 0.5);
`;

const FormatPopover = styled.div`
  position: absolute;
  z-index: 5;
  right: 393px;
  bottom: 0;
  width: 641px;
  display: grid;
  gap: 10px;
  padding: 20px 20px 6px;
  background: #1f1f1f;
  box-shadow: 0 6px 24px rgba(0, 0, 0, 0.6);
  &::after {
    content: "";
    position: absolute;
    right: -10px;
    bottom: 311px;
    border: 10px solid transparent;
    border-left-color: #1f1f1f;
    border-right: none;
  }
`;

const FormatRow = styled.div`
  display: flex;
  gap: 10px;
`;

const FormatButton = styled.button`
  height: 40px;
  padding: 1px 20px 0 19px;
  border: 1px solid #424242;
  border-radius: 8px;
  background: transparent;
  color: #dcdcdc;
  font-size: 16px;
`;

export default App
